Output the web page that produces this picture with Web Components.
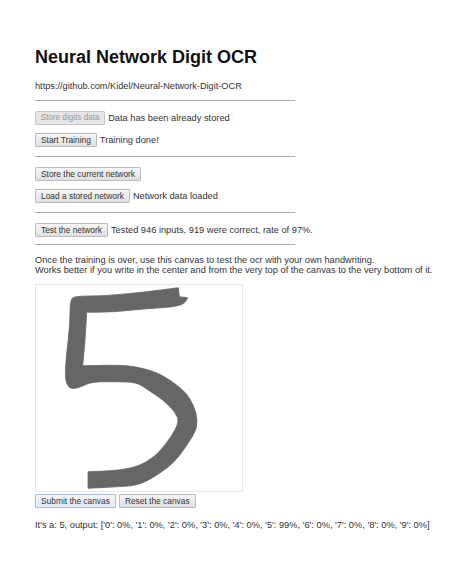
<!DOCTYPE html>
<html>
<head>
<meta charset="utf-8">
<title>Neural Network Digit OCR</title>
<style>
    html, body { margin: 0; background: #fff; }
</style>
</head>
<body>
<ocr-page>
    <h-title slot="title">Neural Network Digit OCR</h-title>
    <ocr-row slot="link" style="font-size:9.2px">https://github.com/Kidel/Neural-Network-Digit-OCR</ocr-row>
</ocr-page>

<script>
class HTitle extends HTMLElement {
    constructor() {
        super();
        this.attachShadow({ mode: 'open' });
        this.shadowRoot.innerHTML = `
            <style>
                :host {
                    display: block;
                    font: bold 18px/24px "Liberation Sans", Arial, sans-serif;
                    color: #111;
                }
            </style>
            <slot></slot>
        `;
    }
}

class OcrRule extends HTMLElement {
    constructor() {
        super();
        this.attachShadow({ mode: 'open' });
        this.shadowRoot.innerHTML = `
            <style>
                :host {
                    display: block;
                    width: 260px;
                    height: 1px;
                    background: #aaa;
                }
            </style>
        `;
    }
}

class OcrButton extends HTMLElement {
    constructor() {
        super();
        this.attachShadow({ mode: 'open' });
        this.shadowRoot.innerHTML = `
            <style>
                :host {
                    display: inline-flex;
                    align-items: center;
                    box-sizing: border-box;
                    height: 14px;
                    padding: 0 5px;
                    border: 1px solid #bbb;
                    border-radius: 1px;
                    background: linear-gradient(#f6f6f6, #e0e0e0);
                    font: 8.4px/12px "Liberation Sans", Arial, sans-serif;
                    color: #333;
                    white-space: nowrap;
                }
                :host([disabled]) {
                    color: #999;
                    border-color: #c8c8c8;
                    background: #e6e6e6;
                    font-size: 8.2px;
                    padding: 0 4.5px;
                }
                :host([focused]) {
                    border-color: #a9bde4;
                    background: linear-gradient(#f4f6fb, #e4e8f2);
                    box-shadow: 0 0 1px #a9bde4;
                }
            </style>
            <slot></slot>
        `;
    }
}

class OcrRow extends HTMLElement {
    constructor() {
        super();
        this.attachShadow({ mode: 'open' });
        this.shadowRoot.innerHTML = `
            <style>
                :host {
                    display: flex;
                    align-items: center;
                    gap: 3px;
                    height: 14px;
                    font: 9.27px/14px "Liberation Sans", Arial, sans-serif;
                    color: #333;
                    white-space: nowrap;
                }
            </style>
            <slot></slot>
        `;
    }
}

// outline of the handwritten digit, a repeated point stays a sharp corner
const DIGIT_POINTS = [
    [70, 300], [75, 296], [103.3, 296], [143, 292.3], [178.3, 287.7], [178.3, 287.7],
    [179.3, 296.7], [179.3, 296.7], [187.7, 297.7], [187.7, 297.7], [185, 303], [176.7, 306.7],
    [143, 309], [113, 312], [86.7, 312.3], [86.7, 312.3], [85, 341.7], [82.7, 365.7], [82.7, 365.7],
    [123.3, 365], [140, 367.7], [156.7, 372.3], [170, 380], [183, 390], [190, 398.3], [196.7, 413.3],
    [197.3, 428.3], [188.3, 443.3], [175, 461.7], [160, 473.3], [140, 485], [120, 486.7],
    [88, 488.3], [88, 488.3], [88, 471.7], [88, 471.7], [110, 471], [131.7, 468.3], [146.7, 462.3],
    [161.7, 450], [180, 423.3], [175, 411.7], [163.3, 400], [148.3, 390], [136.7, 382.3],
    [116.7, 381.7], [91.7, 381.7], [81.7, 386.7], [71.7, 389.3], [66.7, 385], [65, 375],
    [66.7, 351.7], [70, 325]
];

function smoothPath(points) {
    const mid = (a, b) => [(a[0] + b[0]) / 2, (a[1] + b[1]) / 2];
    const start = mid(points[points.length - 1], points[0]);
    let d = `M${start[0]} ${start[1]}`;
    points.forEach((p, i) => {
        const m = mid(p, points[(i + 1) % points.length]);
        d += ` Q${p[0]} ${p[1]} ${m[0]} ${m[1]}`;
    });
    return d + ' Z';
}

class OcrCanvas extends HTMLElement {
    constructor() {
        super();
        this.attachShadow({ mode: 'open' });
        this.shadowRoot.innerHTML = `
            <style>
                :host {
                    display: block;
                    box-sizing: border-box;
                    width: 208px;
                    height: 208px;
                    border: 1px solid #e6e6e6;
                    background: #fff;
                }
                svg { display: block; width: 100%; height: 100%; }
            </style>
            <svg viewBox="36 285 206 206">
                <path fill="#666" stroke="#666" stroke-width="0.8" stroke-linejoin="round" d="${smoothPath(DIGIT_POINTS)}"/>
            </svg>
        `;
    }
}

class OcrPage extends HTMLElement {
    constructor() {
        super();
        this.attachShadow({ mode: 'open' });
        this.shadowRoot.innerHTML = `
            <style>
                :host {
                    display: flex;
                    flex-direction: column;
                    box-sizing: border-box;
                    width: 474px;
                    height: 577px;
                    padding: 45px 0 0 35px;
                    background: #fff;
                }
                .link { margin-top: 10px; }
                ocr-rule { margin-top: 7px; }
                .first { margin-top: 10px; }
                .gap8 { margin-top: 8px; }
                .text {
                    margin-top: 10px;
                    font: 9.27px/10px "Liberation Sans", Arial, sans-serif;
                    color: #333;
                    white-space: nowrap;
                }
                ocr-canvas { margin-top: 9px; }
                .actions { margin-top: 2px; gap: 3px; }
                .result { margin-top: 10px; }
            </style>
            <slot name="title"></slot>
            <div class="link"><slot name="link"></slot></div>
            <ocr-rule></ocr-rule>
            <ocr-row class="first"><ocr-button disabled>Store digits data</ocr-button>Data has been already stored</ocr-row>
            <ocr-row class="gap8"><ocr-button>Start Training</ocr-button>Training done!</ocr-row>
            <ocr-rule style="margin-top:9px"></ocr-rule>
            <ocr-row class="first"><ocr-button>Store the current network</ocr-button></ocr-row>
            <ocr-row class="gap8"><ocr-button>Load a stored network</ocr-button>Network data loaded</ocr-row>
            <ocr-rule style="margin-top:9px"></ocr-rule>
            <ocr-row class="first"><ocr-button>Test the network</ocr-button>Tested 946 inputs, 919 were correct, rate of 97%.</ocr-row>
            <ocr-rule></ocr-rule>
            <div class="text">Once the training is over, use this canvas to test the ocr with your own handwriting.<br>Works better if you write in the center and from the very top of the canvas to the very bottom of it.</div>
            <ocr-canvas></ocr-canvas>
            <ocr-row class="actions"><ocr-button focused>Submit the canvas</ocr-button><ocr-button>Reset the canvas</ocr-button></ocr-row>
            <ocr-row class="result">It's a: 5, output: ['0': 0%, '1': 0%, '2': 0%, '3': 0%, '4': 0%, '5': 99%, '6': 0%, '7': 0%, '8': 0%, '9': 0%]</ocr-row>
        `;
    }
}

customElements.define('h-title', HTitle);
customElements.define('ocr-rule', OcrRule);
customElements.define('ocr-button', OcrButton);
customElements.define('ocr-row', OcrRow);
customElements.define('ocr-canvas', OcrCanvas);
customElements.define('ocr-page', OcrPage);
</script>
</body>
</html>
